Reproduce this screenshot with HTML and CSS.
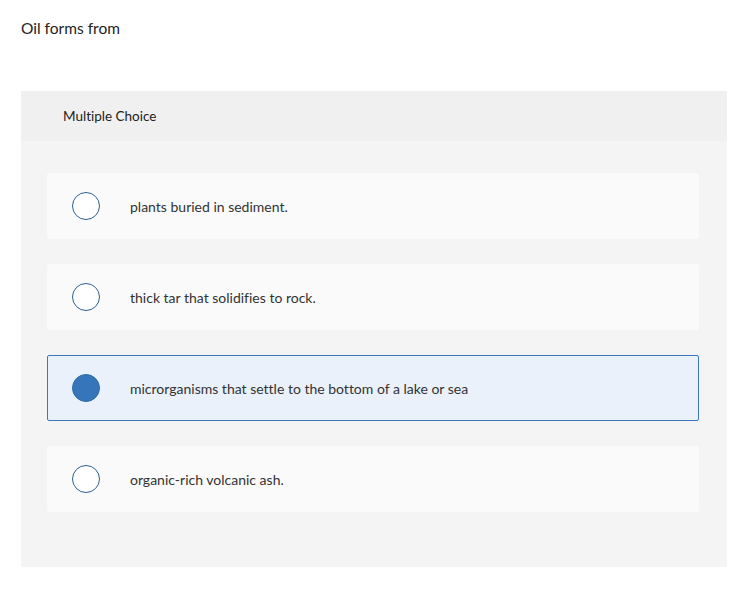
FILE: index.html
```html
<!DOCTYPE html>
<html lang="en">
<head>
    <meta charset="UTF-8" />
    <title>Oil forms from</title>
    <link rel="stylesheet" href="styles.css">
</head>
<body>
    <div class="question">Oil forms from</div>
    <div class="panel">
        <div class="panel-head">Multiple Choice</div>
        <div class="choices">
            <label class="choice">
                <span class="radio"></span>
                <span class="choice-text">plants buried in sediment.</span>
            </label>
            <label class="choice">
                <span class="radio"></span>
                <span class="choice-text">thick tar that solidifies to rock.</span>
            </label>
            <label class="choice selected">
                <span class="radio"></span>
                <span class="choice-text">microrganisms that settle to the bottom of a lake or sea</span>
            </label>
            <label class="choice">
                <span class="radio"></span>
                <span class="choice-text">organic-rich volcanic ash.</span>
            </label>
        </div>
    </div>
</body>
</html>
```

FILE: styles.css
```css
html, body {
    margin: 0;
    padding: 0;
    background: #fff;
}
body {
    font-family: Lato, "Open Sans", sans-serif;
    font-variant-ligatures: none;
    color: #222;
}
.question {
    padding: 18px 21px 0 21px;
    height: 91px;
    box-sizing: border-box;
    font-size: 15.5px;
    line-height: 20px;
}
.panel {
    margin: 0 20px 0 21px;
    width: 706px;
    background: #f4f4f4;
    border-radius: 2px;
    padding-bottom: 55px;
}
.panel-head {
    height: 50px;
    display: flex;
    align-items: center;
    padding-left: 42px;
    background: #f0f0f0;
    font-size: 13.5px;
}
.choices {
    padding: 32px 28px 0 26px;
    display: flex;
    flex-direction: column;
    gap: 25px;
}
.choice {
    height: 66px;
    box-sizing: border-box;
    display: flex;
    align-items: center;
    gap: 30px;
    padding-left: 24px;
    background: #fafafa;
    border: 1px solid #fafafa;
    border-radius: 2px;
    font-size: 14px;
    color: #333;
}
.choice.selected {
    background: #eaf1fa;
    border-color: #3a78c1;
}
.radio {
    width: 28px;
    height: 28px;
    box-sizing: border-box;
    border-radius: 50%;
    border: 1.5px solid #2f5f92;
    background: #fff;
    flex: none;
}
.choice.selected .radio {
    background: #3775bb;
    border-color: #2e6aa8;
}
```
